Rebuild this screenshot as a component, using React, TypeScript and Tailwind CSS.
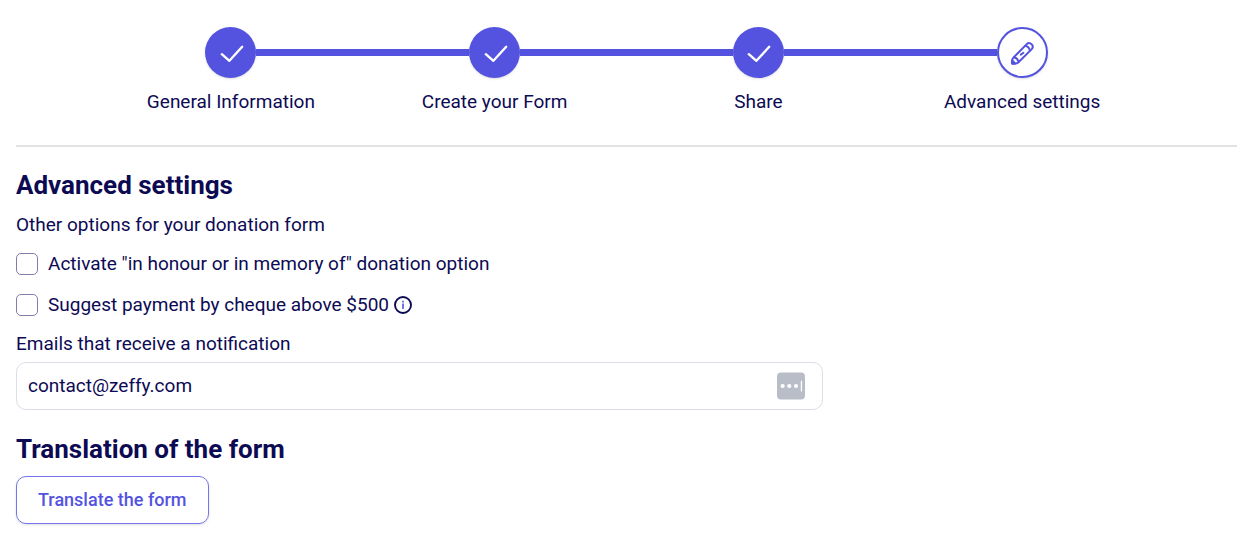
import { useState } from "react";
import clsx from "clsx";

interface Step {
    label: string;
    done: boolean;
}

const steps: Step[] = [
    { label: "General Information", done: true },
    { label: "Create your Form", done: true },
    { label: "Share", done: true },
    { label: "Advanced settings", done: false },
];

function CheckIcon() {
    return (
        <svg className="size-7" viewBox="0 0 28 28" fill="none" stroke="currentColor" strokeWidth="2.4" strokeLinecap="round" strokeLinejoin="round" aria-hidden="true">
            <path d="M4.8 15.2 12.4 21.8 25.2 7.8" />
        </svg>
    );
}

function PencilIcon() {
    return (
        <svg className="size-7" viewBox="0 0 28 28" fill="none" stroke="currentColor" strokeWidth="2" strokeLinecap="round" strokeLinejoin="round" aria-hidden="true">
            <path d="M4.2 24.6c-.5-2.2 0-4.8 1.4-6.2L18.8 5.1c1.4-1.3 3.5-1.1 4.8.2s1.4 3.4.1 4.8L10.5 23.2c-1.5 1.4-4 1.9-6.3 1.4Z" />
            <path d="M17.2 6.8c2.3.4 4.1 2 4.7 4.8M6 18.2c2.3.5 3.9 2 4.5 4.6" />
            <path d="M12.8 15.6 15.4 13.8" />
            <path d="M4.2 24.6 4.4 21.6 7.2 24.4Z" fill="currentColor" />
        </svg>
    );
}

function InfoIcon() {
    return (
        <svg className="size-5" viewBox="0 0 20 20" fill="none" aria-hidden="true">
            <circle cx="10" cy="10" r="8" stroke="#0d0a54" strokeWidth="1.9" />
            <path d="M10 8.6v5.4M10 5.8v1.6" stroke="#5453df" strokeWidth="1.6" />
        </svg>
    );
}

function Stepper() {
    return (
        <ol className="mx-auto grid max-w-[1055px] grid-cols-4">
            {steps.map((step, index) => (
                <li key={step.label} className="flex flex-col items-center gap-3">
                    <div className="flex w-full items-center">
                        <div className={clsx("h-[7px] flex-1", index > 0 && "bg-[#5453df]")} />
                        <div
                            className={clsx(
                                "flex size-[51px] items-center justify-center rounded-full shadow-sm",
                                step.done
                                    ? "bg-[#5453df] text-white"
                                    : "border-2 border-[#5453df] bg-white text-[#5453df]"
                            )}
                        >
                            {step.done ? <CheckIcon /> : <PencilIcon />}
                        </div>
                        <div
                            className={clsx(
                                "h-[7px] flex-1",
                                index < steps.length - 1 && "bg-[#5453df]"
                            )}
                        />
                    </div>
                    <span>{step.label}</span>
                </li>
            ))}
        </ol>
    );
}

interface OptionProps {
    id: string;
    label: string;
    checked: boolean;
    onChange: (checked: boolean) => void;
}

function Option({ id, label, checked, onChange }: OptionProps) {
    return (
        <div className="flex items-center gap-[10px]">
            <input
                id={id}
                type="checkbox"
                checked={checked}
                onChange={(e) => onChange(e.target.checked)}
                className="size-[22px] appearance-none rounded-[5px] border border-[#7f7dab] bg-white checked:bg-[#5453df]"
            />
            <label htmlFor={id}>{label}</label>
        </div>
    );
}

export default function App() {
    const [honour, setHonour] = useState(false);
    const [cheque, setCheque] = useState(false);
    const [email, setEmail] = useState("contact@zeffy.com");

    return (
        <div className="bg-white pt-[27px] pr-[13px] pb-4 pl-4 font-['Roboto',sans-serif] text-[19px] leading-6 text-[#0d0a54]">
            <Stepper />
            <hr className="mt-[31px] border-t-2 border-[#e2e2e2]" />

            <main className="pt-[22px]">
                <h1 className="text-[26px] leading-8 font-bold">Advanced settings</h1>
                <p className="mt-3">Other options for your donation form</p>

                <div className="mt-[15px] flex flex-col gap-[17px]">
                    <Option
                        id="honour"
                        label={'Activate "in honour or in memory of" donation option'}
                        checked={honour}
                        onChange={setHonour}
                    />
                    <div className="flex items-center gap-1">
                        <Option
                            id="cheque"
                            label="Suggest payment by cheque above $500"
                            checked={cheque}
                            onChange={setCheque}
                        />
                        <button type="button" aria-label="More information">
                            <InfoIcon />
                        </button>
                    </div>
                </div>

                <label htmlFor="emails" className="mt-[15px] block">
                    Emails that receive a notification
                </label>
                <div className="mt-[6px] flex h-12 max-w-[807px] items-center rounded-[10px] border border-[#dddce8] pr-[17px] pl-[11px]">
                    <input
                        id="emails"
                        type="email"
                        value={email}
                        onChange={(e) => setEmail(e.target.value)}
                        className="min-w-0 flex-1 bg-transparent outline-none"
                    />
                    <svg className="size-7" viewBox="0 0 28 28" aria-hidden="true">
                        <rect y="0.5" width="28" height="27" rx="4" fill="#b9bdc8" />
                        <g fill="#fff">
                            <circle cx="5.6" cy="14" r="2.1" />
                            <circle cx="12.3" cy="14" r="2.1" />
                            <circle cx="19" cy="14" r="2.1" />
                            <rect x="23.8" y="8.8" width="1.3" height="10.6" />
                        </g>
                    </svg>
                </div>

                <h2 className="mt-[23px] text-[26px] leading-8 font-bold">Translation of the form</h2>
                <button
                    type="button"
                    className="mt-[11px] h-12 rounded-[10px] border border-[#7574e8] px-[21px] text-[18px] font-medium text-[#5453df] shadow-sm"
                >
                    Translate the form
                </button>
            </main>
        </div>
    );
}
